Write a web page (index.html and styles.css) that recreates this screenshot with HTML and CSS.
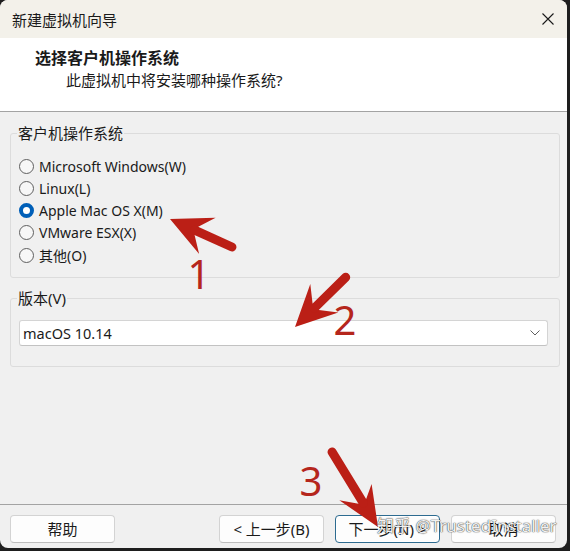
FILE: index.html
```html
<!DOCTYPE html>
<html lang="zh-CN">
<head>
<meta charset="utf-8">
<title>新建虚拟机向导</title>
<link rel="stylesheet" href="styles.css">
</head>
<body>
<div class="window">
  <div class="titlebar">
    <span class="title">新建虚拟机向导</span>
    <svg class="close" width="12" height="12" viewBox="0 0 12 12" aria-label="关闭">
      <path d="M0.5 0.5 L11.5 11.5 M11.5 0.5 L0.5 11.5" />
    </svg>
  </div>

  <div class="header">
    <div class="header-title">选择客户机操作系统</div>
    <div class="header-sub">此虚拟机中将安装哪种操作系统?</div>
  </div>

  <div class="content">
    <fieldset class="group group-os">
      <legend>客户机操作系统</legend>
      <label class="radio"><span class="radio-dot"></span>Microsoft Windows(W)</label>
      <label class="radio"><span class="radio-dot"></span>Linux(L)</label>
      <label class="radio"><span class="radio-dot is-checked"></span>Apple Mac OS X(M)</label>
      <label class="radio"><span class="radio-dot"></span>VMware ESX(X)</label>
      <label class="radio"><span class="radio-dot"></span>其他(O)</label>
    </fieldset>

    <fieldset class="group group-version">
      <legend>版本(V)</legend>
      <div class="select">
        <span class="select-value">macOS 10.14</span>
        <svg class="chevron" width="10" height="6" viewBox="0 0 10 6">
          <path d="M0.5 0.5 L5 5 L9.5 0.5" />
        </svg>
      </div>
    </fieldset>
  </div>

  <div class="footer">
    <button class="btn btn-help">帮助</button>
    <div class="nav">
      <button class="btn">&lt; 上一步(B)</button>
      <button class="btn btn-default">下一步(N) &gt;</button>
      <button class="btn">取消</button>
    </div>
  </div>

  <!-- hand-drawn step annotations -->
  <svg class="marks" width="567" height="548" viewBox="0 0 567 548">
    <g class="arrow" transform="translate(170 219) rotate(24.3)">
      <path d="M0 0 L41 -20 L29 -4.5 L29 4.5 L41 20 Z" />
      <line x1="27" y1="0" x2="68" y2="0" />
    </g>
    <text class="step" x="199" y="289">1</text>

    <g class="arrow" transform="translate(295 327) rotate(-44.4)">
      <path d="M0 0 L41 -20 L29 -4.5 L29 4.5 L41 20 Z" />
      <line x1="27" y1="0" x2="71" y2="0" />
    </g>
    <text class="step" x="345" y="335">2</text>

    <g class="arrow" transform="translate(378 527) rotate(-121.5)">
      <path d="M0 0 L43 -19 L30 -4.5 L30 4.5 L40 17 Z" />
      <line x1="28" y1="0" x2="88" y2="0" />
    </g>
    <text class="step" x="311" y="496">3</text>
  </svg>

  <div class="watermark">知乎 @TrustedInstaller</div>
</div>
</body>
</html>
```

FILE: styles.css
```css
html, body {
  margin: 0;
  padding: 0;
}

body {
  background: #1e1e1e;
  width: 570px;
  height: 551px;
  overflow: hidden;
  font-family: "Noto Sans", "Noto Sans CJK SC", sans-serif;
  color: #1a1a1a;
}

.window {
  position: relative;
  width: 567px;
  height: 548px;
  background: #f0f0f0;
  border-radius: 8px;
  overflow: hidden;
  display: flex;
  flex-direction: column;
}

/* title bar */
.titlebar {
  height: 38px;
  flex: none;
  background: #f3f1ea;
  display: flex;
  align-items: center;
  justify-content: space-between;
  padding: 0 13px 0 12px;
  font-size: 15px;
}

.close path {
  stroke: #1a1a1a;
  stroke-width: 1.1;
  fill: none;
}

/* wizard page header */
.header {
  height: 74px;
  flex: none;
  box-sizing: border-box;
  background: #ffffff;
  border-bottom: 1px solid #a3a3a3;
  padding: 9px 0 0 35px;
}

.header-title {
  font-size: 16px;
  line-height: 22px;
  font-weight: 700;
}

.header-sub {
  font-size: 15px;
  line-height: 22px;
  margin-left: 31px;
}

/* page body */
.content {
  flex: 1;
  padding: 11px 7px 0 10px;
}

.group {
  margin: 0;
  border: 1px solid #dcdcdc;
  border-radius: 3px;
  min-width: 0;
}

.group legend {
  font-size: 15px;
  line-height: 20px;
  padding: 0 1px;
  margin-left: -2px;
}

.group-os {
  padding: 12px 0 11px 8px;
}

.group-version {
  margin-top: 10px;
  padding: 12px 11px 20px 8px;
}

.radio {
  display: flex;
  align-items: center;
  height: 22.25px;
  font-size: 14px;
}

.radio-dot {
  width: 15px;
  height: 15px;
  box-sizing: border-box;
  border: 1px solid #5f5f5f;
  border-radius: 50%;
  background: #f7f7f7;
  margin-right: 5px;
  flex: none;
}

.radio-dot.is-checked {
  border: 4.5px solid #005fb8;
  background: #ffffff;
}

.select {
  height: 26px;
  box-sizing: border-box;
  background: #ffffff;
  border: 1px solid #d4d4d4;
  border-bottom-color: #c2c2c2;
  border-radius: 3px;
  display: flex;
  align-items: center;
  justify-content: space-between;
  padding: 0 7px 0 3px;
  font-size: 14.5px;
}

.chevron path {
  stroke: #606060;
  stroke-width: 1;
  fill: none;
}

/* button row */
.footer {
  flex: none;
  height: 44px;
  box-sizing: border-box;
  border-top: 1px solid #a3a3a3;
  padding: 10px 11px 0 10px;
  display: flex;
  align-items: flex-start;
  justify-content: space-between;
}

.nav {
  display: flex;
  gap: 11px;
}

.btn {
  width: 105px;
  height: 28px;
  box-sizing: border-box;
  background: #fdfdfd;
  border: 1px solid #d3d3d3;
  border-bottom-color: #bdbdbd;
  border-radius: 4px;
  font-family: "Noto Sans", "Noto Sans CJK SC", sans-serif;
  font-size: 15px;
  color: #1a1a1a;
  padding: 0;
  line-height: 26px;
}

.btn-default {
  border: 1px solid #2d6b90;
  box-shadow: inset 0 0 0 1px #ffffff;
}

/* annotations drawn over the dialog */
.marks {
  position: absolute;
  left: 0;
  top: 0;
  pointer-events: none;
}

.arrow path {
  fill: #bb1f16;
}

.arrow line {
  stroke: #bb1f16;
  stroke-width: 9;
  stroke-linecap: round;
}

.step {
  fill: #b5261c;
  font-family: "Noto Sans", sans-serif;
  font-size: 40px;
  text-anchor: middle;
}

.watermark {
  position: absolute;
  left: 377px;
  top: 514px;
  font-size: 17px;
  line-height: 24px;
  color: rgba(255, 255, 255, 0.95);
  text-shadow: 0 0 1px rgba(0, 0, 0, 0.7), 0 0 1px rgba(0, 0, 0, 0.5), 0 0 2px rgba(0, 0, 0, 0.25);
  white-space: nowrap;
  pointer-events: none;
}
```
